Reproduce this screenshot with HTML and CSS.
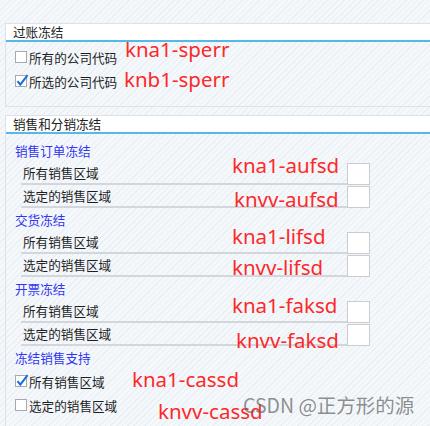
FILE: index.html
```html
<!DOCTYPE html>
<html lang="zh-CN">
<head>
<meta charset="utf-8">
<link rel="stylesheet" href="styles.css">
</head>
<body>
<div class="page">
  <section class="group group-post">
    <div class="group-head">过账冻结</div>
    <div class="group-body">
      <div class="chk-row">
        <span class="cb"></span><span>所有的公司代码</span>
      </div>
      <div class="chk-row">
        <span class="cb"><svg viewBox="0 0 14 14" width="14" height="14"><path d="M2.5 7.2 L5.3 10.6 L12.6 1.2" fill="none" stroke="#1d6fd8" stroke-width="2.1"/></svg></span><span>所选的公司代码</span>
      </div>
    </div>
  </section>

  <section class="group group-sales">
    <div class="group-head">销售和分销冻结</div>
    <div class="group-body sales-body">
      <div class="sec-title">销售订单冻结</div>
      <div class="field-row"><span class="field-label">所有销售区域</span><span class="box"></span></div>
      <div class="field-row"><span class="field-label">选定的销售区域</span><span class="box"></span></div>

      <div class="sec-title">交货冻结</div>
      <div class="field-row"><span class="field-label">所有销售区域</span><span class="box"></span></div>
      <div class="field-row"><span class="field-label">选定的销售区域</span><span class="box"></span></div>

      <div class="sec-title">开票冻结</div>
      <div class="field-row"><span class="field-label">所有销售区域</span><span class="box"></span></div>
      <div class="field-row"><span class="field-label">选定的销售区域</span><span class="box"></span></div>

      <div class="sec-title">冻结销售支持</div>
      <div class="chk-row">
        <span class="cb"><svg viewBox="0 0 14 14" width="14" height="14"><path d="M2.5 7.2 L5.3 10.6 L12.6 1.2" fill="none" stroke="#1d6fd8" stroke-width="2.1"/></svg></span><span>所有销售区域</span>
      </div>
      <div class="chk-row">
        <span class="cb"></span><span>选定的销售区域</span>
      </div>
    </div>
  </section>

  <span class="note n-sperr-a">kna1-sperr</span>
  <span class="note n-sperr-b">knb1-sperr</span>
  <span class="note n-aufsd-a">kna1-aufsd</span>
  <span class="note n-aufsd-b">knvv-aufsd</span>
  <span class="note n-lifsd-a">kna1-lifsd</span>
  <span class="note n-lifsd-b">knvv-lifsd</span>
  <span class="note n-faksd-a">kna1-faksd</span>
  <span class="note n-faksd-b">knvv-faksd</span>
  <span class="note n-cassd-a">kna1-cassd</span>
  <span class="note n-cassd-b">knvv-cassd</span>

  <span class="watermark">CSDN @正方形的源</span>
</div>
</body>
</html>
```

FILE: styles.css
```css
* { box-sizing: border-box; }

html, body {
  margin: 0;
  padding: 0;
}

body {
  width: 430px;
  height: 426px;
  overflow: hidden;
  background-color: #f3f6f9;
  background-image: repeating-linear-gradient(135deg, #f5f8fb 0, #f5f8fb 3px, #e9eff5 3px, #e9eff5 4px);
  font-family: "Noto Sans CJK SC", "Noto Sans", sans-serif;
  font-size: 12.6px;
  color: #1e1e1e;
}

.page {
  position: relative;
  width: 430px;
  height: 426px;
  padding-top: 23px;
}

.group {
  margin-left: 5px;
  margin-right: -4px;
  border: 1px solid #dce2e8;
  border-right: 0;
}

.group-post {
  height: 84px;
}

.group-sales {
  margin-top: 8px;
  height: 320px;
  border-bottom: 0;
}

.group-head {
  height: 18px;
  line-height: 16px;
  padding-left: 7px;
  background: #ffffff;
  border-bottom: 2px solid #56b8e6;
  color: #222;
}

.group-body {
  padding-top: 3px;
}

.sales-body {
  padding-top: 5px;
}

.chk-row {
  display: flex;
  align-items: center;
  gap: 2px;
  height: 24px;
  padding-left: 9px;
}

.cb {
  position: relative;
  display: inline-block;
  width: 12px;
  height: 12px;
  flex: none;
  background: #ffffff;
  border: 1px solid #a6a9ad;
}

.cb svg {
  position: absolute;
  left: -1px;
  top: -2px;
}

.sec-title {
  height: 23px;
  line-height: 23px;
  padding-left: 9px;
  color: #3035f2;
}

.field-row {
  display: flex;
  height: 23px;
  padding-left: 15px;
}

.field-label {
  width: 326px;
  height: 23px;
  line-height: 21px;
  padding-left: 2px;
  border-bottom: 2px solid #d3d7db;
}

.box {
  width: 23px;
  height: 22px;
  margin-top: 1px;
  background: #ffffff;
  border: 1px solid #c9cdd1;
}

.note {
  position: absolute;
  font-family: "Noto Sans", "Open Sans", sans-serif;
  font-size: 20.5px;
  line-height: 1;
  color: #fb2a2a;
  white-space: nowrap;
}

.n-sperr-a { left: 125px; top: 39px; }
.n-sperr-b { left: 124px; top: 69px; }
.n-aufsd-a { left: 232px; top: 155px; }
.n-aufsd-b { left: 234px; top: 189px; }
.n-lifsd-a { left: 232px; top: 226px; }
.n-lifsd-b { left: 232px; top: 257px; }
.n-faksd-a { left: 232px; top: 295px; }
.n-faksd-b { left: 236px; top: 330px; }
.n-cassd-a { left: 132px; top: 369px; }
.n-cassd-b { left: 158px; top: 401px; }

.watermark {
  position: absolute;
  left: 243px;
  top: 395px;
  font-family: "Noto Sans CJK SC", sans-serif;
  font-size: 19.5px;
  line-height: 1;
  color: rgba(95, 95, 95, 0.7);
  white-space: nowrap;
}
```
